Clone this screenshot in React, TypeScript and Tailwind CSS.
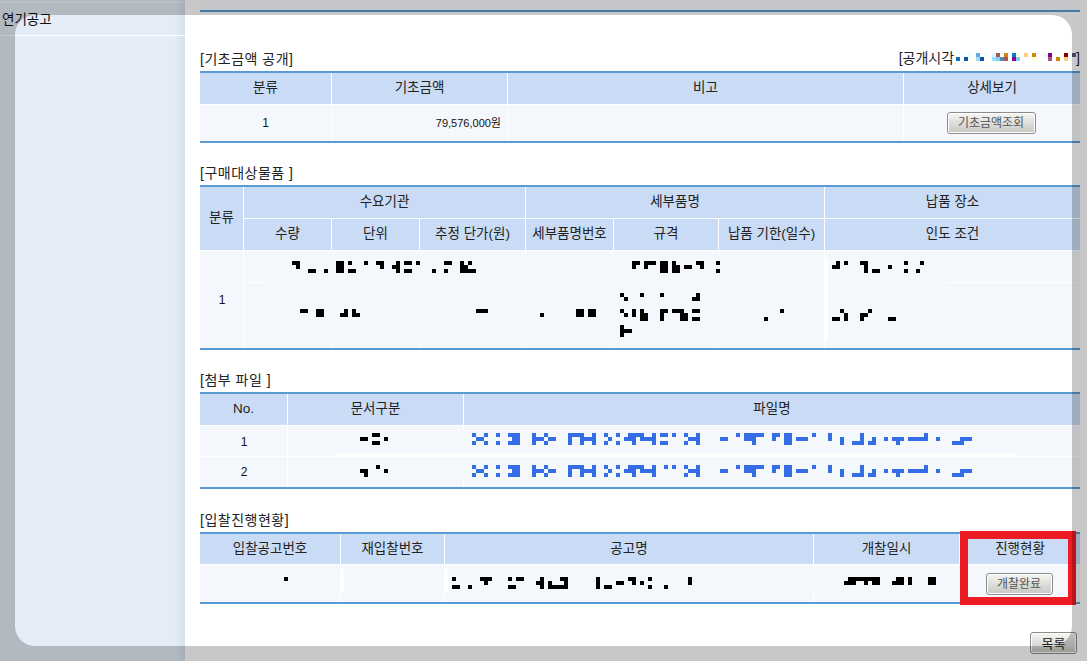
const FONT = "font-['Liberation_Sans','Noto_Sans_CJK_KR',sans-serif]";

type Rows = [number, number[]][];

const th = 'h-[32px] border-r border-b border-white bg-[#cadcf5] p-0 text-center text-[13.5px] font-normal text-[#222] last:border-r-0';
const td = 'bg-[#f4f7fc] p-0 text-center text-[12px] text-[#111]';

// mosaic left over from the blurred cells, in page coordinates
function Mosaic({ top, height, rows, color = '#000' }: { top: number; height: number; rows: Rows; color?: string }) {
  return (
    <svg className="absolute left-0 top-0" width={880} height={height} viewBox={`200 ${top} 880 ${height}`} shapeRendering="crispEdges">
      {rows.flatMap(([y, xs]) => xs.map((x) => <rect key={`${x}-${y}`} x={x} y={y} width={4} height={4} fill={color} />))}
    </svg>
  );
}

// white leftovers of the cell borders around the blurred parts
function Lines({ top, height, lines }: { top: number; height: number; lines: number[][] }) {
  return (
    <svg className="absolute left-0 top-0" width={880} height={height} viewBox={`200 ${top} 880 ${height}`} shapeRendering="crispEdges">
      {lines.map(([x, y, w, h]) => <rect key={`${x}-${y}-${w}`} x={x} y={y} width={w} height={h} fill="#fff" />)}
    </svg>
  );
}

function Title({ children }: { children: React.ReactNode }) {
  return <div className="h-[23px] text-[14px] leading-[22px] tracking-[0.5px] text-[#222]">{children}</div>;
}

function Frame({ children }: { children: React.ReactNode }) {
  return <div className="relative border-y-2 border-[#5b9bd5]">{children}</div>;
}

function Btn({ label, className }: { label: string; className: string }) {
  return (
    <button className={`rounded-[3px] border border-[#8c8c8c] bg-gradient-to-b from-[#f6f6f2] to-[#c6c6c2] text-[12px] leading-none text-[#555] shadow-[inset_0_0_0_1px_#fff] ${className}`}>
      {label}
    </button>
  );
}

const stamp: [number, number, string][] = [
  [956, 57, '#0a6fc0'], [964, 57, '#0a55a8'], [968, 53, '#e0ffff'], [976, 53, '#6aa8e0'], [976, 57, '#a8d8f8'], [980, 57, '#0a55a8'], [984, 53, '#e0ffff'],
  [992, 53, '#e0f4ff'], [992, 57, '#99ddff'], [996, 53, '#aa5555'], [1000, 57, '#5588bb'], [1004, 53, '#cc8811'], [1004, 57, '#aa5555'], [996, 57, '#88ccee'],
  [1012, 53, '#0a77cc'], [1012, 57, '#880088'], [1016, 53, '#ffffd8'], [1016, 57, '#88ccff'], [1024, 53, '#ffcc88'], [1032, 53, '#cc8800'], [1032, 57, '#ffffcc'],
  [1044, 53, '#e8f8ff'], [1048, 53, '#880088'], [1048, 57, '#aa5588'], [1056, 57, '#cc8800'], [1064, 53, '#880000'], [1064, 57, '#ffcc88'], [1072, 53, '#555588'],
];

const goods: Rows = [
  [261, [292, 296, 336, 340, 348, 364, 376, 380, 396, 404, 408, 416, 444, 448, 460, 468, 632, 636, 644, 648, 652, 660, 664, 672, 696, 700, 716, 836, 844, 860, 864, 904, 920]],
  [265, [296, 336, 340, 380, 392, 396, 460, 464, 632, 644, 660, 664, 672, 676, 684, 688, 700, 832, 836, 864, 888]],
  [269, [308, 312, 324, 336, 340, 348, 352, 396, 404, 408, 432, 444, 460, 464, 468, 472, 660, 664, 672, 676, 716, 864, 872, 876, 904, 916]],
  [293, [620, 640, 660, 696]],
  [297, [624, 692, 696]],
  [309, [300, 304, 316, 320, 344, 352, 476, 480, 484, 576, 580, 588, 592, 620, 632, 640, 660, 664, 672, 676, 680, 692, 696, 780, 840, 868]],
  [313, [316, 320, 340, 344, 352, 356, 540, 576, 580, 588, 592, 624, 632, 640, 644, 660, 680, 684, 844, 860, 864]],
  [317, [640, 644, 660, 680, 684, 692, 696, 764, 832, 836, 844, 860, 888, 892]],
  [325, [620]],
  [329, [620, 624, 628]],
  [333, [620]],
];

const nameHead = [472, 484, 496, 508, 512, 516, 532, 544, 568, 572, 576, 580, 592, 604, 616, 628, 632, 636, 640, 652, 660, 664];
const nameMid = [476, 480, 512, 516, 532, 536, 540, 548, 552, 568, 580, 584, 588, 592, 608, 624, 628, 632, 640, 644, 648, 652];
const nameLow = [472, 484, 496, 508, 512, 516, 532, 544, 568, 580, 592, 604, 616, 632, 652, 660, 664];
const tailHead = [696, 684, 736, 744, 748, 752, 756, 760, 772, 776, 784, 788, 812, 828, 860, 924];
const tailMid = [688, 692, 696, 720, 724, 744, 748, 752, 772, 784, 788, 796, 800, 804, 828, 840, 860, 872, 884, 892, 896, 900, 908, 912, 916, 920, 924, 936, 960, 964, 968];
const tailLow = [684, 696, 752, 784, 788, 840, 852, 856, 860, 868, 872, 896, 952, 956, 960];

const files: Rows = [
  [433, [...nameHead, ...tailHead, 672]],
  [437, [...nameMid, ...tailMid]],
  [441, [...nameLow, ...tailLow]],
  [465, [...nameHead.slice(0, -2), 664, 672, ...tailHead]],
  [469, [...nameMid, ...tailMid]],
  [473, [...nameLow.slice(0, -2), ...tailLow]],
];

const kinds: Rows = [
  [433, [372, 376]],
  [437, [360, 364, 384]],
  [441, [372, 376]],
  [465, [376]],
  [469, [360, 364, 384]],
  [473, [364]],
];

const bids: Rows = [
  [577, [284, 452, 480, 484, 488, 508, 516, 520, 540, 560, 564, 596, 628, 632, 648, 688, 848, 852, 856, 860, 864, 868, 872, 876, 896, 900, 908, 928, 932]],
  [581, [484, 536, 540, 548, 564, 596, 616, 620, 632, 640, 688, 844, 848, 852, 864, 872, 876, 892, 896, 900, 908, 928, 932]],
  [585, [452, 456, 468, 508, 512, 540, 548, 552, 556, 560, 564, 596, 604, 608, 648, 664]],
];

export default function App() {
  return (
    <div className={`relative flex h-[661px] overflow-hidden bg-white ${FONT}`}>
      {/* left menu */}
      <div className="w-[185px] shrink-0 bg-[linear-gradient(to_right,#e4ecf7_175px,#d3dfea_185px)]">
        <div className="mt-[2px] h-px bg-white/60" />
        <div className="h-[33px] border-b border-white pl-[2px] pt-[8px] text-[13.5px] leading-[18px] text-[#111]">연기공고</div>
      </div>

      {/* detail */}
      <div className="w-[902px] shrink-0 pl-[15px] pr-[7px]">
        <div className="h-[10px] bg-[#f9fcff]" />
        <div className="h-[2px] bg-[#5b9bd5]" />

        <div className="mt-[36px]">
          <div className="flex justify-between">
            <Title>[기초금액 공개]</Title>
            <div className="relative h-[23px] text-[14px] leading-[20px] text-[#222]">
              [공개시각<span className="inline-block w-[122px]" />]
            </div>
          </div>
          <Frame>
            <table className="w-full table-fixed border-separate border-spacing-0">
              <colgroup>
                <col className="w-[132px]" />
                <col className="w-[176px]" />
                <col className="w-[396px]" />
                <col />
              </colgroup>
              <thead>
                <tr>
                  <th className={th}>분류</th>
                  <th className={th}>기초금액</th>
                  <th className={th}>비고</th>
                  <th className={th}>상세보기</th>
                </tr>
              </thead>
              <tbody>
                <tr className="h-[36px]">
                  <td className={`${td} border-r border-white`}>1</td>
                  <td className={`${td} border-r border-white pr-[6px] text-right !text-[11px]`}>79,576,000원</td>
                  <td className={`${td} border-r border-white`} />
                  <td className={td}><Btn label="기초금액조회" className="mr-[2px] h-[22px] w-[89px]" /></td>
                </tr>
              </tbody>
            </table>
          </Frame>
          <svg className="absolute left-0 top-0" width={1087} height={70} shapeRendering="crispEdges">
            {stamp.map(([x, y, c]) => <rect key={`${x}-${y}`} x={x} y={y} width={4} height={4} fill={c} />)}
          </svg>
        </div>

        <div className="mt-[19px]">
          <Title>[구매대상물품 ]</Title>
          <Frame>
            <table className="w-full table-fixed border-separate border-spacing-0">
              <colgroup>
                <col className="w-[44px]" />
                <col className="w-[88px]" />
                <col className="w-[88px]" />
                <col className="w-[106px]" />
                <col className="w-[88px]" />
                <col className="w-[105px]" />
                <col className="w-[106px]" />
                <col />
              </colgroup>
              <thead>
                <tr>
                  <th rowSpan={2} className={th}>분류</th>
                  <th colSpan={3} className={th}>수요기관</th>
                  <th colSpan={3} className={th}>세부품명</th>
                  <th className={th}>납품 장소</th>
                </tr>
                <tr>
                  <th className={th}>수량</th>
                  <th className={th}>단위</th>
                  <th className={th}>추정 단가(원)</th>
                  <th className={th}>세부품명번호</th>
                  <th className={th}>규격</th>
                  <th className={th}>납품 기한(일수)</th>
                  <th className={th}>인도 조건</th>
                </tr>
              </thead>
              <tbody>
                <tr className="h-[97px]">
                  <td className={td}>1</td>
                  <td colSpan={7} className={td} />
                </tr>
              </tbody>
            </table>
            <Lines
              top={187}
              height={161}
              lines={[
                [243, 251, 1, 97], [525, 251, 1, 7], [824, 251, 1, 7], [824, 258, 4, 82], [824, 340, 1, 8],
                [331, 341, 1, 7], [419, 341, 1, 7], [525, 341, 1, 7], [613, 341, 1, 7], [718, 341, 1, 7],
                [243, 282, 26, 1], [945, 282, 135, 1],
              ]}
            />
            <Mosaic top={187} height={161} rows={goods} />
          </Frame>
        </div>

        <div className="mt-[19px]">
          <Title>[첨부 파일 ]</Title>
          <Frame>
            <table className="w-full table-fixed border-separate border-spacing-0">
              <colgroup>
                <col className="w-[88px]" />
                <col className="w-[176px]" />
                <col />
              </colgroup>
              <thead>
                <tr>
                  <th className={th}>No.</th>
                  <th className={th}>문서구분</th>
                  <th className={th}>파일명</th>
                </tr>
              </thead>
              <tbody>
                <tr className="h-[31px]">
                  <td className={td}>1</td>
                  <td colSpan={2} className={td} />
                </tr>
                <tr className="h-[30px]">
                  <td className={td}>2</td>
                  <td colSpan={2} className={td} />
                </tr>
              </tbody>
            </table>
            <Lines
              top={394}
              height={93}
              lines={[[287, 426, 1, 61], [463, 426, 1, 4], [463, 480, 1, 7], [200, 456, 880, 1], [336, 453, 680, 3]]}
            />
            <Mosaic top={394} height={93} rows={kinds} />
            <Mosaic top={394} height={93} rows={files} color="#356de8" />
          </Frame>
        </div>

        <div className="mt-[20px]">
          <Title>[입찰진행현황]</Title>
          <Frame>
            <table className="w-full table-fixed border-separate border-spacing-0">
              <colgroup>
                <col className="w-[141px]" />
                <col className="w-[104px]" />
                <col className="w-[369px]" />
                <col className="w-[146px]" />
                <col />
              </colgroup>
              <thead>
                <tr>
                  <th className={`${th} !h-[31px]`}>입찰공고번호</th>
                  <th className={`${th} !h-[31px]`}>재입찰번호</th>
                  <th className={`${th} !h-[31px]`}>공고명</th>
                  <th className={`${th} !h-[31px]`}>개찰일시</th>
                  <th className={`${th} !h-[31px]`}>진행현황</th>
                </tr>
              </thead>
              <tbody>
                <tr className="h-[37px]">
                  <td colSpan={4} className={td} />
                  <td className={td}><Btn label="개찰완료" className="mr-[2px] h-[22px] w-[67px]" /></td>
                </tr>
              </tbody>
            </table>
            <Lines
              top={534}
              height={68}
              lines={[[340, 565, 1, 37], [444, 565, 1, 37], [340, 569, 4, 23], [444, 569, 4, 23], [813, 565, 1, 5], [813, 592, 1, 10]]}
            />
            <Mosaic top={534} height={68} rows={bids} />
            <div className="absolute left-[760px] top-[-3px] h-[74px] w-[116px] border-8 border-[#ed1c24]" />
          </Frame>
        </div>

        <div className="mr-[3px] mt-[28px] flex justify-end">
          <Btn label="목록" className="h-[22px] w-[47px] !text-[13px] !text-[#222]" />
        </div>
      </div>

      {/* dimmed window around the panel */}
      <div className="pointer-events-none absolute left-[15px] top-[15px] h-[631px] w-[1057px] rounded-[20px] shadow-[0_0_0_1200px_rgba(0,0,0,0.216)]" />
    </div>
  );
}
